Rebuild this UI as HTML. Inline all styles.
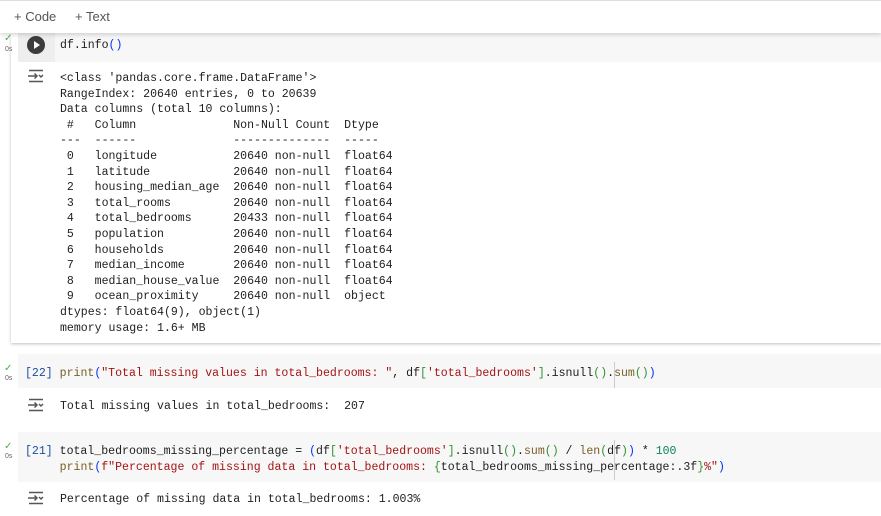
<!DOCTYPE html>
<html><head><style>
body{margin:0;width:881px;height:516px;background:#fff;overflow:hidden;position:relative;font-family:"Liberation Mono",monospace;font-size:11.55px;color:#212121}
.a{position:absolute}
pre{margin:0;font-family:inherit;font-size:inherit;line-height:15.6px;white-space:pre}
.top{left:0;top:0;width:881px;height:33px;background:#fff;box-shadow:0 2px 4px rgba(0,0,0,.15);font-family:"Liberation Sans",sans-serif;font-size:13px;color:#555;z-index:2}
.chk{color:#4caf50;font-size:10px;font-family:"DejaVu Sans",sans-serif}
.os{font-size:7px;color:#666;font-family:"Liberation Sans",sans-serif}
.gray{background:#f7f7f7}
.f{color:#795e26}.s{color:#a31515}.b{color:#0431fa}.g{color:#319331}.n{color:#098658}
.ico{width:18px;height:14px}
</style></head><body>
<div class="a top"><span class="a" style="left:14px;top:9px">+ Code</span><span class="a" style="left:75px;top:9px">+ Text</span></div>
<div class="a" style="left:0;top:0;width:881px;height:1px;background:#ddd;z-index:3"></div>

<div class="a" style="left:11px;top:33px;width:870px;height:310px;box-shadow:0 1px 3px rgba(0,0,0,.25);background:#fff"></div>
<div class="a gray" style="left:18px;top:33px;width:863px;height:29px"></div>
<div class="a" style="left:18px;top:33px;width:37px;height:29px;background:#eee"></div>
<span class="a chk" style="left:4px;top:33px">✓</span><span class="a os" style="left:5px;top:46px">0s</span>
<svg class="a" style="left:27px;top:36px" width="18" height="18"><circle cx="9" cy="9" r="9" fill="#3c3c3c"/><path d="M7 5L13 9L7 13Z" fill="#fff"/></svg>
<pre class="a" style="left:60px;top:38px">df.info<span class="b">()</span></pre>
<svg class="a ico" style="left:27px;top:69px" viewBox="0 0 18 14"><path d="M2 1.5H16M1 7H10M7.5 4.5L10 7L7.5 9.5M2 12.5H16M12 6L14 8L16 6" stroke="#555" stroke-width="1.5" fill="none"/></svg>
<pre class="a" style="left:60px;top:71px">&lt;class 'pandas.core.frame.DataFrame'&gt;
RangeIndex: 20640 entries, 0 to 20639
Data columns (total 10 columns):
 #   Column              Non-Null Count  Dtype  
---  ------              --------------  -----  
 0   longitude           20640 non-null  float64
 1   latitude            20640 non-null  float64
 2   housing_median_age  20640 non-null  float64
 3   total_rooms         20640 non-null  float64
 4   total_bedrooms      20433 non-null  float64
 5   population          20640 non-null  float64
 6   households          20640 non-null  float64
 7   median_income       20640 non-null  float64
 8   median_house_value  20640 non-null  float64
 9   ocean_proximity     20640 non-null  object 
dtypes: float64(9), object(1)
memory usage: 1.6+ MB</pre>

<div class="a gray" style="left:18px;top:354px;width:863px;height:34px"></div>
<span class="a chk" style="left:4px;top:363px">✓</span><span class="a os" style="left:5px;top:375px">0s</span>
<pre class="a" style="left:25px;top:366px"><span style="color:#1a4d9c">[22]</span> <span class="f">print</span><span class="b">(</span><span class="s">"Total missing values in total_bedrooms: "</span>, df<span class="g">[</span><span class="s">'total_bedrooms'</span><span class="g">]</span>.isnull<span class="g">()</span>.<span class="f">sum</span><span class="g">()</span><span class="b">)</span></pre>
<div class="a" style="left:614px;top:362px;width:1px;height:26px;background:#ccc"></div>
<svg class="a ico" style="left:27px;top:398px" viewBox="0 0 18 14"><path d="M2 1.5H16M1 7H10M7.5 4.5L10 7L7.5 9.5M2 12.5H16M12 6L14 8L16 6" stroke="#555" stroke-width="1.5" fill="none"/></svg>
<pre class="a" style="left:60px;top:399px">Total missing values in total_bedrooms:  207</pre>

<div class="a gray" style="left:18px;top:432px;width:863px;height:50px"></div>
<span class="a chk" style="left:4px;top:441px">✓</span><span class="a os" style="left:5px;top:453px">0s</span>
<pre class="a" style="left:25px;top:444px"><span style="color:#1a4d9c">[21]</span> total_bedrooms_missing_percentage = <span class="b">(</span>df<span class="g">[</span><span class="s">'total_bedrooms'</span><span class="g">]</span>.isnull<span class="g">()</span>.<span class="f">sum</span><span class="g">()</span> / <span class="f">len</span><span class="g">(</span>df<span class="g">)</span><span class="b">)</span> * <span class="n">100</span>
     <span class="f">print</span><span class="b">(</span><span class="s">f"Percentage of missing data in total_bedrooms: </span><span class="g">{</span>total_bedrooms_missing_percentage:.3f<span class="g">}</span><span class="s">%"</span><span class="b">)</span></pre>
<div class="a" style="left:614px;top:440px;width:1px;height:40px;background:#ccc"></div>
<svg class="a ico" style="left:27px;top:491px" viewBox="0 0 18 14"><path d="M2 1.5H16M1 7H10M7.5 4.5L10 7L7.5 9.5M2 12.5H16M12 6L14 8L16 6" stroke="#555" stroke-width="1.5" fill="none"/></svg>
<pre class="a" style="left:60px;top:492px">Percentage of missing data in total_bedrooms: 1.003%</pre>
</body></html>
